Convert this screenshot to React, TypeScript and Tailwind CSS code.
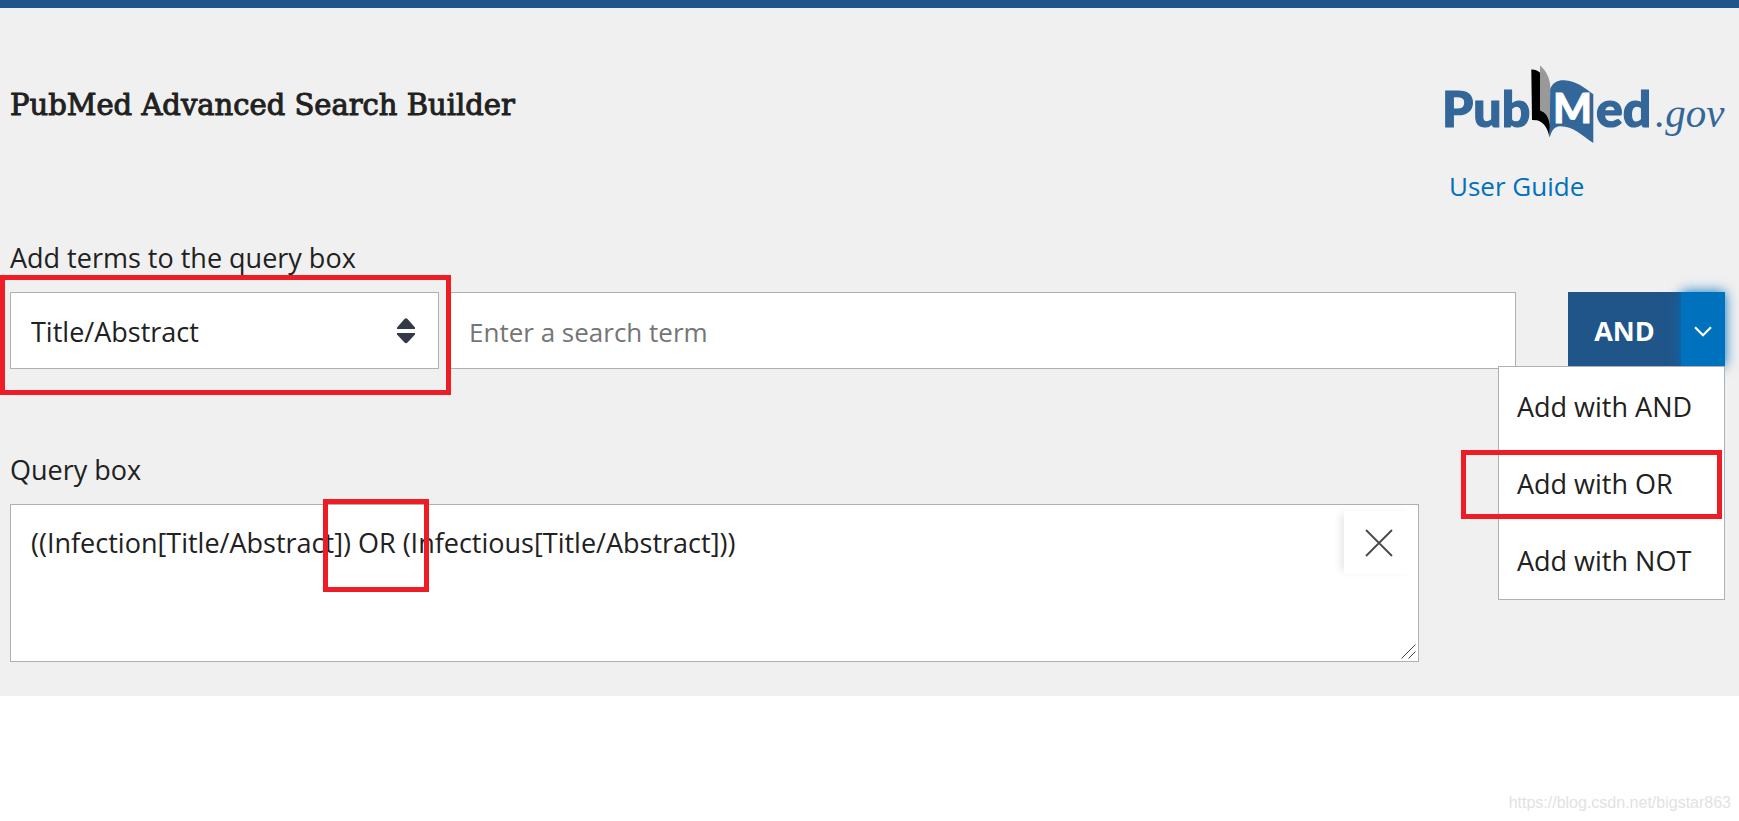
import { useState } from "react";

const operators = ["AND", "OR", "NOT"];

function Highlight({ className }: { className: string }) {
  return (
    <span
      aria-hidden="true"
      className={`pointer-events-none absolute z-20 border-5 border-[#ee1c25] ${className}`}
    />
  );
}

function Logo() {
  return (
    <svg viewBox="0 0 280 80" className="block h-20 w-[280px] overflow-visible" role="img" aria-label="PubMed.gov">
      <path d="M86.3 5.4C90 5.2 93 6.5 96 9.5L96 47C101 48 104.500 54 105 60L104.500 73.500C103 64 98 57.500 92 56.200L87 56Z" fill="#000" />
      <path d="M95 1.500C101 6 105.500 15 105.500 25L105 62C104 54 101 48 95 46.500Z" fill="#999" />
      <path d="M105.200 25C108 18 113 16 119 16.200C131 16.500 140 24 148.300 30.300L148.300 79C137 71.500 128 62 115 62.200C109 62.500 106.500 67 104.700 73.500Z" fill="#336699" />
      <g fill="#336699" stroke="#336699" strokeWidth="1.200" fontFamily="Lato, sans-serif" fontWeight="900" fontSize="50">
        <text x="-3" y="63">Pub</text>
        <text x="151" y="63">ed</text>
      </g>
      <text x="108" y="59" fill="#fff" stroke="#fff" strokeWidth="0.800" fontFamily="Lato, sans-serif" fontWeight="900" fontSize="41">M</text>
      <text x="210" y="63" fill="#336699" fontFamily="'Liberation Serif', serif" fontStyle="italic" fontSize="41">.gov</text>
    </svg>
  );
}

export default function App() {
  const [operator, setOperator] = useState("AND");
  const [query, setQuery] = useState("((Infection[Title/Abstract]) OR (Infectious[Title/Abstract]))");

  return (
    <div className="flex min-h-screen flex-col bg-white font-['Open_Sans',sans-serif] text-[27px] leading-9 text-[#212121]">
      <main className="border-t-8 border-[#20558a] bg-[#f0f0f0] pr-3.5 pb-[34px] pl-2.5">
        <header className="flex items-start justify-between pt-14">
          <h1 className="pt-5 font-['DejaVu_Serif',serif] text-[29px] leading-[42px] font-normal [-webkit-text-stroke:1px_#212121]">
            PubMed Advanced Search Builder
          </h1>
          <div>
            <Logo />
            <a href="#guide" className="mt-6 block pl-1 text-[26px] text-[#0071bc]">User Guide</a>
          </div>
        </header>

        <form onSubmit={(e) => e.preventDefault()}>
          <label htmlFor="field" className="mt-9 block">Add terms to the query box</label>
          <div className="mt-4 flex items-start">
            <div className="relative w-[429px] shrink-0">
              <select id="field" className="block h-[77px] w-full appearance-none border border-[#aeb0b5] bg-white px-5 pt-0.5 outline-none">
                <option>Title/Abstract</option>
                <option>All Fields</option>
              </select>
              <svg viewBox="0 0 18 26" className="pointer-events-none absolute top-[26px] right-6 h-[26px] w-[18px]" fill="#323a45" aria-hidden="true">
                <path d="M0 11V9.500L7.500 1Q9 -0.500 10.500 1L18 9.500V11ZM0 15V16.500L7.500 24.500Q9 26 10.500 24.500L18 16.500V15Z" />
              </svg>
              <Highlight className="-top-[17px] -right-3 -left-2.5 h-[120px]" />
            </div>
            <input
              aria-label="Enter a search term"
              placeholder="Enter a search term"
              className="ml-[9px] h-[77px] min-w-0 flex-1 border border-[#aeb0b5] bg-white px-5 pt-0.5 text-[26px] outline-none placeholder:text-[#757575]"
            />
            <div className="relative ml-[52px] flex h-[74px] shrink-0">
              <button type="submit" className="w-[113px] bg-[#20558a] pt-1 pr-3 pl-3 font-bold text-white">{operator}</button>
              <button type="button" aria-label="Choose operator" aria-expanded="true" className="flex w-11 items-center justify-center bg-[#0071bc] pt-1 shadow-[0_0_12px_#0071bc]">
                <svg viewBox="0 0 18 11" className="h-[11px] w-[18px]" fill="none" stroke="#fff" strokeWidth="2.200" aria-hidden="true">
                  <path d="M1 1.200L9 9.200L17 1.200" />
                </svg>
              </button>
              <ul className="absolute top-full right-0 z-10 w-[227px] border border-[#aeb0b5] bg-white pt-px">
                {operators.map((name) => (
                  <li key={name} className="relative">
                    <button type="button" onClick={() => setOperator(name)} className="block h-[77px] w-full pl-[18px] text-left whitespace-nowrap">
                      Add with {name}
                    </button>
                    {name === "OR" && <Highlight className="top-[5px] right-0.5 -left-[38px] h-[69px]" />}
                  </li>
                ))}
              </ul>
            </div>
          </div>

          <label htmlFor="query" className="mt-[83px] block">Query box</label>
          <div className="relative mt-4 mr-[306px]">
            <textarea
              id="query"
              value={query}
              onChange={(e) => setQuery(e.target.value)}
              className="block h-[158px] w-full resize-none border border-[#aeb0b5] bg-white px-5 py-5 outline-none"
            />
            <svg viewBox="0 0 15 15" className="pointer-events-none absolute right-[3px] bottom-[3px] size-[15px]" stroke="#444" aria-hidden="true">
              <path d="M0.500 14.500L14.500 0.500M7.500 14.500L14.500 7.500" />
            </svg>
            <button type="button" aria-label="Clear query" onClick={() => setQuery("")} className="absolute top-[7px] right-[5px] flex h-[63px] w-[70px] items-center justify-center bg-white shadow-[-6px_0_8px_-3px_#0000001a]">
              <svg viewBox="0 0 28 28" className="size-7" stroke="#4a4845" strokeWidth="1.800" aria-hidden="true">
                <path d="M1 1L27 27M27 1L1 27" />
              </svg>
            </button>
            <Highlight className="-top-[5px] left-[313px] h-[93px] w-[106px]" />
          </div>
        </form>
      </main>
      <footer className="mt-auto pr-2 pb-2 text-right font-['Liberation_Sans',sans-serif] text-base leading-5 text-[#e2e2e2]">
        https://blog.csdn.net/bigstar863
      </footer>
    </div>
  );
}
